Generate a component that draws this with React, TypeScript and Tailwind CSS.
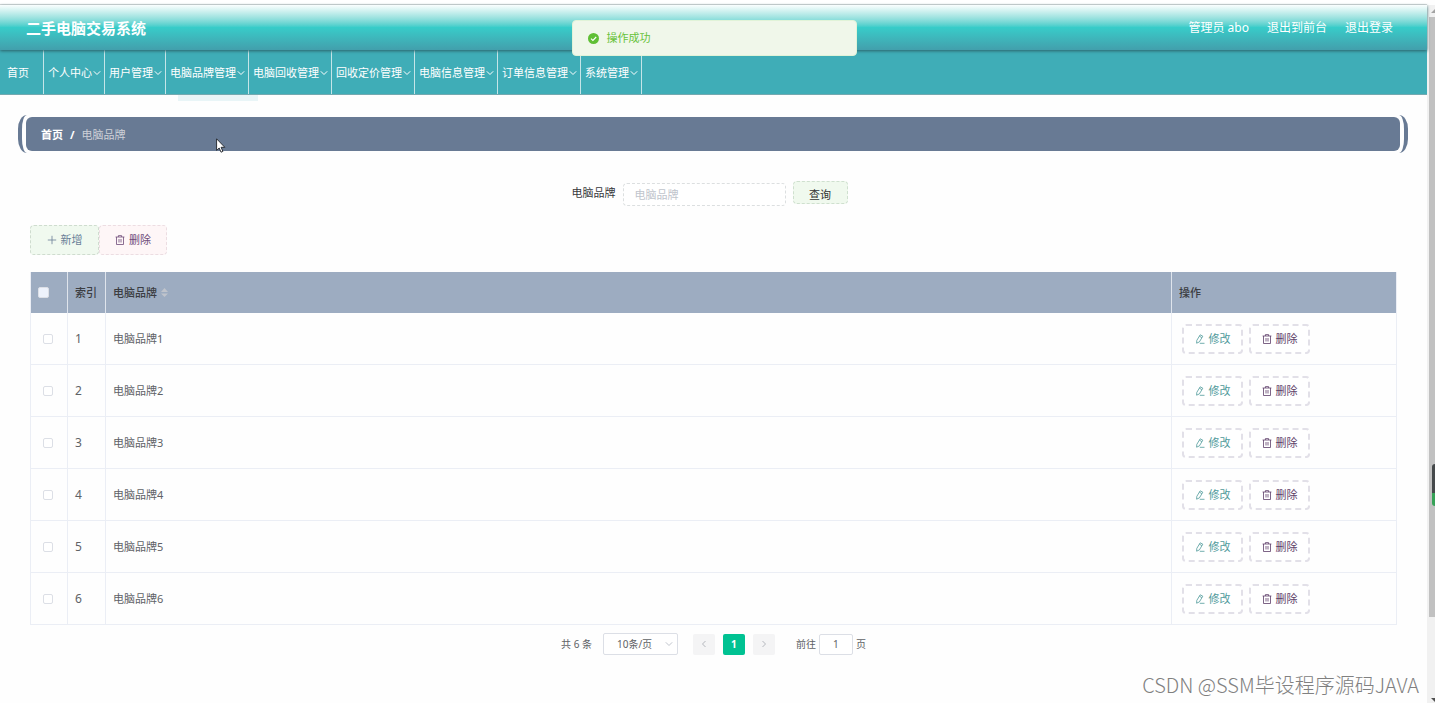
import type { ReactNode } from 'react';

type NavEntry = { label: string; menu: boolean };

const navEntries: NavEntry[] = [
  { label: '首页', menu: false },
  { label: '个人中心', menu: true },
  { label: '用户管理', menu: true },
  { label: '电脑品牌管理', menu: true },
  { label: '电脑回收管理', menu: true },
  { label: '回收定价管理', menu: true },
  { label: '电脑信息管理', menu: true },
  { label: '订单信息管理', menu: true },
  { label: '系统管理', menu: true },
];

const brands = ['电脑品牌1', '电脑品牌2', '电脑品牌3', '电脑品牌4', '电脑品牌5', '电脑品牌6'];

function Chevron({ d, className }: { d: string; className: string }) {
  return (
    <svg viewBox="0 0 8 8" className={className} fill="none" stroke="currentColor" aria-hidden="true">
      <path d={d} />
    </svg>
  );
}

const DOWN = 'M0.8 2.3 4 5.5 7.2 2.3';
const LEFT = 'M5.5 1 2.5 4 5.5 7';
const RIGHT = 'M2.5 1 5.5 4 2.5 7';

function TrashIcon() {
  return (
    <svg viewBox="0 0 10 10" className="size-[10px]" fill="none" stroke="currentColor" strokeWidth="0.8" aria-hidden="true">
      <path d="M0.6 2h8.8M3.4 2V0.6h3.2V2M1.5 2v7.5h7V2M4 4v3.5M6 4v3.5" />
    </svg>
  );
}

function EditIcon() {
  return (
    <svg viewBox="0 0 10 10" className="size-[10px]" fill="none" stroke="currentColor" strokeWidth="0.8" aria-hidden="true">
      <path d="M5.2 0.8 7.8 2.2 4.4 7.9 1.6 9.2 1.8 6.4ZM4.4 2.2 6.9 3.6M4.8 9.3h4.7" />
    </svg>
  );
}

function PlusIcon() {
  return (
    <svg viewBox="0 0 10 10" className="size-[10px]" fill="none" stroke="currentColor" strokeWidth="0.8" aria-hidden="true">
      <path d="M5 0.8v8.4M0.8 5h8.4" />
    </svg>
  );
}

function RowButton({ icon, label, tone }: { icon: ReactNode; label: string; tone: string }) {
  return (
    <button type="button" className={`flex h-[30px] w-[61px] items-center justify-center gap-1 rounded border-2 border-dashed border-[#e2e0e8] bg-white ${tone}`}>
      {icon}
      {label}
    </button>
  );
}

export default function App() {
  return (
    <div className="relative flex min-h-screen bg-[#fefefe] font-['Noto_Sans','Noto_Sans_CJK_SC',sans-serif] text-[11px] leading-4 text-[#606266]">
      <div className="min-w-0 flex-1">
        <div className="h-[5px] border-b border-[#dcdcdc] bg-white" />
        <header className="relative z-10 flex h-[45px] items-center justify-between bg-linear-to-b from-[#fafefe] via-[#37ccc9] to-[#429fac] pr-[34px] pl-[26px] text-white shadow-[0_1px_3px_#2b6168]">
          <h1 className="text-[15px] leading-5 font-bold">二手电脑交易系统</h1>
          <div className="flex items-center gap-[18px] text-xs">
            <span>管理员 abo</span>
            <a href="#front">退出到前台</a>
            <a href="#logout">退出登录</a>
          </div>
        </header>

        <nav className="flex h-[45px] border-b border-[#74a9b0] bg-[#3fadb7] text-white">
          {navEntries.map((entry) => (
            <a
              key={entry.label}
              href="#nav"
              className={`flex items-center gap-px border-r border-[#c5e5e8] pt-px whitespace-nowrap ${entry.menu ? 'pr-[3px] pl-1' : 'pr-[14px] pl-[7px]'}`}
            >
              {entry.label}
              {entry.menu && <Chevron d={DOWN} className="size-2" />}
            </a>
          ))}
        </nav>

        <div className="mt-5 mr-[19px] ml-[18px] rounded-[9px/14px] border-x-4 border-[#687a94] px-1 py-[2px]">
          <div className="flex h-[34px] items-center gap-[7px] rounded-md bg-[#687a94] px-[15px] pt-px">
            <a href="#home" className="font-bold text-white">首页</a>
            <span className="font-bold text-white">/</span>
            <span className="text-[#ced1d8]">电脑品牌</span>
          </div>
        </div>

        <main className="mt-7 mr-[30px] ml-[30px]">
          <form className="flex items-start justify-center pr-2" onSubmit={(e) => e.preventDefault()}>
            <label htmlFor="brand" className="mt-1 mr-[7px] text-[#37383c]">电脑品牌</label>
            <input
              id="brand"
              type="text"
              placeholder="电脑品牌"
              className="mt-[2px] mr-[7px] h-[23px] w-[163px] rounded border border-dashed border-[#dcdfe0] bg-white px-[11px] outline-none placeholder:text-[#c0c4cc]"
            />
            <button type="submit" className="h-[23px] w-[55px] rounded border border-dashed border-[#cfe0cf] bg-[#f0f9ee] pt-1 text-[#333]">查询</button>
          </form>

          <div className="mt-[19px] flex">
            <button type="button" className="flex h-[30px] w-[69px] items-center justify-center gap-1 rounded border border-dashed border-[#cfdccf] bg-[#f0f9ef] text-[#6a7f98]">
              <PlusIcon />
              新增
            </button>
            <button type="button" className="flex h-[30px] w-[68px] items-center justify-center gap-1 rounded border border-dashed border-[#ecdde2] bg-[#fef6f7] text-[#6e4b78]">
              <TrashIcon />
              删除
            </button>
          </div>

          <table className="mt-[17px] w-full table-fixed border-separate border-spacing-0 border-l border-[#ebeef5] text-left">
            <colgroup>
              <col className="w-[37px]" />
              <col className="w-[38px]" />
              <col />
              <col className="w-[225px]" />
            </colgroup>
            <thead>
              <tr className="bg-[#9dacc1] text-[#3b3d42]">
                <th className="h-[41px] border-r border-[#dfe4ec] pl-[7px]">
                  <input type="checkbox" aria-label="全选" className="block size-[11px] appearance-none rounded-xs border border-[#dcdfe6] bg-[#edf2fc]" />
                </th>
                <th className="border-r border-[#dfe4ec] pl-[7px] font-medium">索引</th>
                <th className="border-r border-[#dfe4ec] pl-[7px] font-medium">
                  <span className="flex items-center gap-1">
                    电脑品牌
                    <svg viewBox="0 0 7 9" className="h-[9px] w-[7px]" fill="#c0c4cc" aria-hidden="true">
                      <path d="M0 4 3.5 0 7 4ZM0 5.5h7L3.5 9Z" />
                    </svg>
                  </span>
                </th>
                <th className="border-r border-[#ebeef5] pl-[7px] font-medium">操作</th>
              </tr>
            </thead>
            <tbody>
              {brands.map((brand, i) => (
                <tr key={brand}>
                  <td className="h-[52px] border-r border-b border-[#ebeef5] pl-3">
                    <input type="checkbox" aria-label={brand} className="block size-[10px] appearance-none rounded-xs border border-[#dcdfe6] bg-white" />
                  </td>
                  <td className="border-r border-b border-[#ebeef5] pl-[7px] text-xs">{i + 1}</td>
                  <td className="border-r border-b border-[#ebeef5] pl-[7px]">{brand}</td>
                  <td className="border-r border-b border-[#ebeef5] pl-[10px]">
                    <div className="flex gap-[6px]">
                      <RowButton icon={<EditIcon />} label="修改" tone="text-[#4f9a9b]" />
                      <RowButton icon={<TrashIcon />} label="删除" tone="text-[#5d3d68]" />
                    </div>
                  </td>
                </tr>
              ))}
            </tbody>
          </table>

          <div className="mt-2 flex items-center justify-center text-[10px]">
            <span className="mr-[11px]">共 6 条</span>
            <div className="relative mr-[15px]">
              <select aria-label="每页条数" className="block h-[22px] w-[75px] appearance-none rounded-xs border border-[#dcdfe6] bg-white pl-[13px] outline-none">
                <option>10条/页</option>
              </select>
              <Chevron d={DOWN} className="pointer-events-none absolute top-[7px] right-[5px] size-2 text-[#c0c4cc]" />
            </div>
            <div className="mr-[21px] flex gap-2">
              <button type="button" aria-label="上一页" className="flex h-[21px] w-[22px] items-center justify-center rounded-xs bg-[#f4f4f5] text-[#b4b7bd]">
                <Chevron d={LEFT} className="size-2" />
              </button>
              <button type="button" className="h-[21px] w-[22px] rounded-xs bg-[#00c292] font-bold text-white">1</button>
              <button type="button" aria-label="下一页" className="flex h-[21px] w-[22px] items-center justify-center rounded-xs bg-[#f4f4f5] text-[#b4b7bd]">
                <Chevron d={RIGHT} className="size-2" />
              </button>
            </div>
            <label htmlFor="page">前往</label>
            <input id="page" type="text" defaultValue="1" className="mx-[3px] h-[21px] w-[34px] rounded-xs border border-[#dcdfe6] bg-white text-center outline-none" />
            <span>页</span>
          </div>
        </main>
      </div>

      <div className="mt-[5px] flex w-2 flex-col items-end bg-[#f1f1f1]">
        <svg viewBox="0 0 5 12" className="h-3 w-[5px]" fill="#a3a3a3" aria-hidden="true">
          <path d="M1 8 5 4V8Z" />
        </svg>
        <div className="h-[600px] w-[6px] bg-[#c1c1c1]" />
        <svg viewBox="0 0 5 6" className="mt-auto h-[6px] w-[5px]" fill="#505050" aria-hidden="true">
          <path d="M1 1H5V5Z" />
        </svg>
      </div>

      <div className="absolute top-[464px] right-0 h-[42px] w-[3px] rounded-l-sm bg-linear-to-b from-[#45494b] from-70% to-[#36a257] to-70%" />
      <div className="absolute top-[95px] left-[178px] h-[6px] w-[80px] bg-[#e9f5f7]" />

      <div role="status" className="absolute top-5 left-1/2 z-20 flex h-[36px] w-[285px] -translate-x-[146px] items-center gap-2 rounded border border-[#e1f3d8] bg-[#f0f7ea] pl-[15px] text-[#67c23a]">
        <svg viewBox="0 0 11 11" className="size-[11px]" aria-hidden="true">
          <circle cx="5.5" cy="5.5" r="5.5" fill="#5fbf35" />
          <path d="M3 5.6 4.9 7.4 8.2 4" fill="none" stroke="#fff" strokeWidth="1.1" />
        </svg>
        操作成功
      </div>

      <svg viewBox="0 0 10 16" className="absolute top-[138px] left-[216px] z-20 h-4 w-[10px]" aria-hidden="true">
        <path d="M0.6 0.8V12.4L3.2 10 5 14.2 6.9 13.4 5.1 9.3H8.8Z" fill="#fff" stroke="#1d2026" strokeWidth="0.9" />
      </svg>

      <div className="absolute right-4 bottom-1 font-['Noto_Sans_CJK_SC',sans-serif] text-xl leading-7 font-light text-[#808080]">
        CSDN @SSM毕设程序源码JAVA
      </div>
    </div>
  );
}
